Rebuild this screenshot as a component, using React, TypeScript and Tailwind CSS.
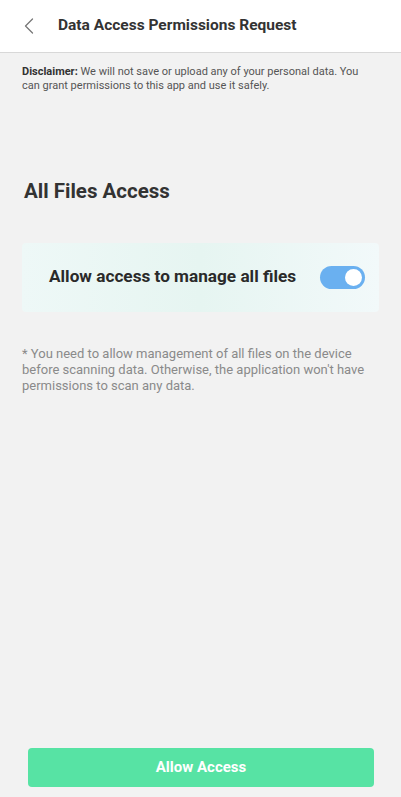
import { ChevronLeft } from "lucide-react";

export default function App() {
  return (
    <div className="flex h-[797px] w-full flex-col bg-[#f2f2f2] font-['Roboto',sans-serif] text-[#333]">
      {/* Header */}
      <div className="flex h-[53px] items-center border-b border-[#d8d8d8] bg-white">
        <ChevronLeft className="ml-[15px] h-[28px] w-[28px] text-[#777]" strokeWidth={1.1} />
        <h1 className="ml-[15px] text-[15.5px] font-bold text-[#333]">Data Access Permissions Request</h1>
      </div>

      {/* Disclaimer */}
      <p className="ml-[22px] mt-[12px] w-[348px] text-[11px] leading-[14px] text-[#555]">
        <span className="font-bold text-[#333]">Disclaimer:</span> We will not save or upload any of your personal data. You can grant permissions to this app and use it safely.
      </p>

      <h2 className="ml-[24px] mt-[83px] text-[20.5px] font-bold text-[#333]">All Files Access</h2>

      {/* Toggle card */}
      <div className="mx-[22px] mt-[36px] flex h-[69px] items-center justify-between rounded-[4px] bg-gradient-to-r from-[#eef8f7] via-[#e6f5f1] to-[#f2f9fa] pl-[27px] pr-[14px]">
        <span className="text-[17.2px] font-bold text-[#2a2a2a]">Allow access to manage all files</span>
        <div className="relative h-[23px] w-[45px] rounded-full bg-[#6ab0f0]">
          <div className="absolute right-[3px] top-[3px] h-[17px] w-[17px] rounded-full bg-white" />
        </div>
      </div>

      <p className="mx-[22px] mt-[34px] text-[13px] leading-[16px] text-[#8a8a8a]">
        * You need to allow management of all files on the device before scanning data. Otherwise, the application won't have permissions to scan any data.
      </p>

      <div className="mt-auto px-[28px] pb-[10px]">
        <button className="h-[39px] w-[346px] rounded-[4px] bg-[#57e3a4] text-[15px] font-bold text-white">
          Allow Access
        </button>
      </div>
    </div>
  );
}
